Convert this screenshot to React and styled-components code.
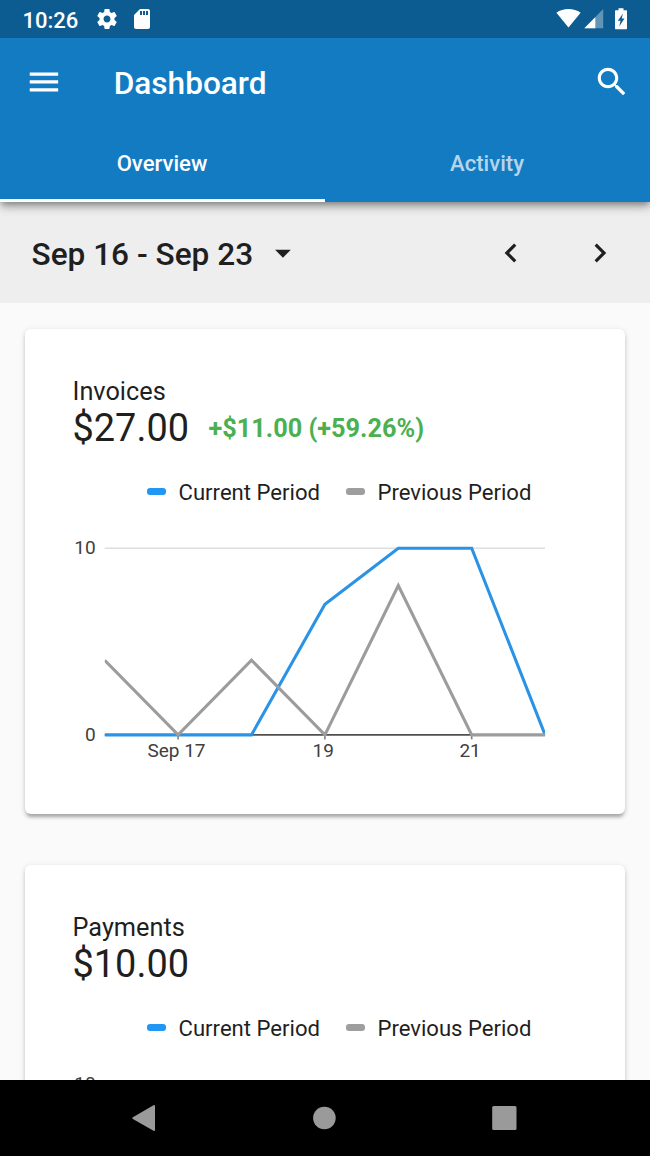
import React from "react";
import styled, { createGlobalStyle } from "styled-components";

const GlobalStyle = createGlobalStyle`
  * { box-sizing: border-box; }
  body { margin: 0; background: #fafafa; font-family: Roboto, "Liberation Sans", sans-serif; }
  svg { display: block; flex: none; }
`;

const Screen = styled.div`
  display: flex;
  flex-direction: column;
  width: 650px;
  height: 1156px;
  overflow: hidden;
  color: #1f1f1f;
`;

const StatusBar = styled.header`
  flex: none;
  position: relative;
  z-index: 2;
  display: flex;
  align-items: center;
  justify-content: space-between;
  height: 38px;
  padding: 0 23px 0 22.5px;
  background: #0d5c91;
  color: #fff;
`;

const StatusGroup = styled.div`
  display: flex;
  align-items: center;
`;

const Clock = styled.span`
  width: 74.5px;
  font-size: 22px;
  font-weight: 500;
  line-height: 34px;
  padding-top: 3px;
`;

const StatusIcon = styled.svg`
  width: ${(p) => p.$w}px;
  height: 22px;
  margin-left: ${(p) => p.$gap || 0}px;
  fill: #fff;
`;

const AppBar = styled.div`
  flex: none;
  position: relative;
  z-index: 1;
  height: 164.3px;
  background: #127bc2;
  color: #fff;
  box-shadow: 0 3px 6px -1.5px rgba(0, 0, 0, 0.3), 0 6px 8px rgba(0, 0, 0, 0.16), 0 1.5px 15px rgba(0, 0, 0, 0.12);
`;

const Toolbar = styled.div`
  display: flex;
  align-items: center;
  height: 88.5px;
  padding: 0 19px 0 25.3px;
`;

const Title = styled.h1`
  flex: 1;
  margin: 3px 0 0 50.5px;
  font-size: 31.6px;
  font-weight: 500;
  line-height: 40px;
`;

const Icon = styled.svg`
  width: 37.9px;
  height: 37.9px;
  fill: currentColor;
`;

const Tabs = styled.nav`
  display: flex;
  height: 75.8px;
`;

const Tab = styled.div`
  flex: 1;
  display: flex;
  align-items: center;
  justify-content: center;
  padding: 0 1px 0 0;
  border-bottom: 3.3px solid ${(p) => (p.$active ? "#fff" : "transparent")};
  color: ${(p) => (p.$active ? "#fff" : "rgba(255,255,255,0.7)")};
  font-size: 22.1px;
  font-weight: 500;
`;

const DateBar = styled.section`
  flex: none;
  display: flex;
  align-items: center;
  height: 100.7px;
  padding: 0 31.5px 0 31.5px;
  background: #eee;
`;

const DateRange = styled.div`
  flex: 1;
  display: flex;
  align-items: center;
  gap: 10.5px;
`;

const DateText = styled.span`
  padding-top: 4.5px;
  font-size: 31.6px;
  font-weight: 500;
  line-height: 40px;
`;

const Pager = styled.div`
  display: flex;
  gap: 50.5px;
`;

const Content = styled.main`
  flex: 1;
  min-height: 0;
  overflow: hidden;
  display: flex;
  flex-direction: column;
  gap: 51px;
  padding: 26px 25px 0;
`;

const Card = styled.article`
  flex: none;
  height: 485px;
  padding: 47px 48px 0 47.5px;
  border-radius: 6px;
  background: #fff;
  box-shadow: 0 4.5px 3px -2px rgba(0, 0, 0, 0.16), 0 3px 4px rgba(0, 0, 0, 0.14), 0 1.5px 6px rgba(0, 0, 0, 0.1);
`;

const CardTitle = styled.h2`
  margin: 0;
  font-size: 25.3px;
  font-weight: 400;
  line-height: 32px;
`;

const Totals = styled.div`
  display: flex;
  align-items: center;
  gap: 19.5px;
  height: 41px;
`;

const Amount = styled.span`
  font-size: 37.9px;
  line-height: 41px;
`;

const Change = styled.span`
  padding-top: 1px;
  color: #4caf50;
  font-size: 25.3px;
  font-weight: 700;
`;

const Legend = styled.div`
  display: flex;
  justify-content: center;
  gap: 26px;
  margin: 29px 0 0 29px;
  white-space: nowrap;
`;

const LegendItem = styled.div`
  display: flex;
  align-items: center;
  gap: 12.5px;
  font-size: 22.1px;
  line-height: 28px;
`;

const Swatch = styled.i`
  width: 19px;
  height: 6.5px;
  margin-top: -1px;
  border-radius: 3px;
  background: ${(p) => p.$color};
`;

const Chart = styled.svg`
  width: 504px;
  height: 240px;
  margin-top: 23px;
`;

const AxisLabel = styled.text`
  fill: #404040;
  font-size: 19px;
  text-anchor: ${(p) => p.$anchor || "middle"};
`;

const NavBar = styled.footer`
  flex: none;
  display: flex;
  align-items: center;
  justify-content: space-between;
  height: 76px;
  padding: 0 133px 0 131px;
  background: #000;
`;

const NavIcon = styled.svg`
  width: 26px;
  height: 28px;
  fill: #9a9a9a;
`;

const BLUE = "#2a93e6";
const GREY = "#9c9c9c";
const LEFT = 31.7;
const STEP = 73.4;
const TOP = 19.2;
const BASE = 205.9;

const toPoints = (values) =>
  values.map((v, i) => `${LEFT + i * STEP},${BASE - (v / 10) * (BASE - TOP)}`).join(" ");

function PeriodChart({ id, current, previous, labels }) {
  const right = LEFT + 6 * STEP;
  return (
    <Chart viewBox="0 0 504 240">
      <clipPath id={id}>
        <rect x={LEFT} y="0" width={6 * STEP} height="240" />
      </clipPath>
      <line x1={LEFT} x2={right} y1={TOP} y2={TOP} stroke="#dedede" strokeWidth="1.6" />
      <line x1={LEFT} x2={right} y1={BASE} y2={BASE} stroke="#505050" strokeWidth="1.6" />
      {labels.map(([i]) => (
        <line key={i} x1={LEFT + i * STEP} x2={LEFT + i * STEP} y1={BASE} y2={BASE + 4.5} stroke="#808080" strokeWidth="1.6" />
      ))}
      <g clipPath={`url(#${id})`} fill="none" strokeWidth="3.1">
        <polyline points={toPoints(current)} stroke={BLUE} />
        <polyline points={toPoints(previous)} stroke={GREY} />
      </g>
      <AxisLabel $anchor="end" x="22.700" y="25">10</AxisLabel>
      <AxisLabel $anchor="end" x="22.700" y="212">0</AxisLabel>
      {labels.map(([i, text]) => (
        <AxisLabel key={text} x={LEFT + i * STEP - 1.6} y="228">{text}</AxisLabel>
      ))}
    </Chart>
  );
}

function SummaryCard({ title, amount, change, ...chart }) {
  return (
    <Card>
      <CardTitle>{title}</CardTitle>
      <Totals>
        <Amount>{amount}</Amount>
        {change && <Change>{change}</Change>}
      </Totals>
      <Legend>
        <LegendItem><Swatch $color="#2196f3" />Current Period</LegendItem>
        <LegendItem><Swatch $color="#9e9e9e" />Previous Period</LegendItem>
      </Legend>
      <PeriodChart {...chart} />
    </Card>
  );
}

const LABELS = [[1, "Sep 17"], [3, "19"], [5, "21"]];

export default function App() {
  return (
    <Screen>
      <GlobalStyle />
      <StatusBar>
        <StatusGroup>
          <Clock>10:26</Clock>
          <StatusIcon $w={20} viewBox="2 1 20 22">
            <path d="M19.43 12.98c.04-.32.07-.64.07-.98s-.03-.66-.07-.98l2.11-1.65c.19-.15.24-.42.12-.64l-2-3.46c-.12-.22-.39-.3-.61-.22l-2.49 1c-.52-.4-1.08-.73-1.69-.98l-.38-2.65C14.46 2.18 14.25 2 14 2h-4c-.25 0-.46.18-.49.42l-.38 2.65c-.61.25-1.17.59-1.69.98l-2.49-1c-.23-.09-.49 0-.61.22l-2 3.46c-.13.22-.07.49.12.64l2.11 1.65c-.04.32-.07.65-.07.98s.03.66.07.98l-2.11 1.65c-.19.15-.24.42-.12.64l2 3.46c.12.22.39.3.61.22l2.49-1c.52.4 1.08.73 1.69.98l.38 2.65c.03.24.24.42.49.42h4c.25 0 .46-.18.49-.42l.38-2.65c.61-.25 1.17-.59 1.69-.98l2.49 1c.23.09.49 0 .61-.22l2-3.46c.12-.22.07-.49-.12-.64l-2.11-1.65zM12 15.5c-1.93 0-3.5-1.57-3.5-3.5s1.57-3.5 3.5-3.5 3.5 1.57 3.5 3.5-1.57 3.5-3.5 3.5z" />
          </StatusIcon>
          <StatusIcon $w={16} $gap={17} viewBox="4 1 16 22">
            <path d="M18 2h-8L4.02 8 4 20c0 1.1.9 2 2 2h12c1.1 0 2-.9 2-2V4c0-1.1-.9-2-2-2zm-6 6h-2V4h2v4zm3 0h-2V4h2v4zm3 0h-2V4h2v4z" />
          </StatusIcon>
        </StatusGroup>
        <StatusGroup>
          <StatusIcon $w={25} viewBox="0 0 25 22">
            <path d="M12.500 19.500L.4 4.700C3.800 2.200 8 1 12.500 1s8.700 1.200 12.100 3.700z" />
          </StatusIcon>
          <StatusIcon $w={20} $gap={3} viewBox="0 0 20 22">
            <path d="M19.200 1v19.300H.3z" opacity=".35" />
            <path d="M11.300 9.200v11.100H.3z" />
          </StatusIcon>
          <StatusIcon $w={12} $gap={11} viewBox="0 0 12 22">
            <path fillRule="evenodd" d="M3.500.2h5v2H11c.6 0 1 .4 1 1v17c0 .6-.4 1-1 1H1c-.6 0-1-.4-1-1v-17c0-.6.4-1 1-1h2.500zM8 5.500L2.800 12.800H5.600L4.200 18.400L9.500 10.500H6.700z" />
          </StatusIcon>
        </StatusGroup>
      </StatusBar>
      <AppBar>
        <Toolbar>
          <Icon viewBox="0 0 24 24"><path d="M3 18h18v-2H3v2zm0-5h18v-2H3v2zm0-7v2h18V6H3z" /></Icon>
          <Title>Dashboard</Title>
          <Icon viewBox="0 0 24 24">
            <path d="M15.5 14h-.79l-.28-.27C15.41 12.590 16 11.110 16 9.500 16 5.910 13.090 3 9.500 3S3 5.910 3 9.500 5.910 16 9.500 16c1.610 0 3.090-.59 4.230-1.570l.27.28v.79l5 4.990L20.490 19l-4.990-5zm-6 0C7.010 14 5 11.990 5 9.500S7.010 5 9.500 5 14 7.010 14 9.500 11.990 14 9.500 14z" />
          </Icon>
        </Toolbar>
        <Tabs>
          <Tab $active>Overview</Tab>
          <Tab>Activity</Tab>
        </Tabs>
      </AppBar>
      <DateBar>
        <DateRange>
          <DateText>Sep 16 - Sep 23</DateText>
          <Icon viewBox="0 0 24 24"><path d="M7 10l5 5 5-5z" /></Icon>
        </DateRange>
        <Pager>
          <Icon viewBox="0 0 24 24"><path d="M15.410 7.410L14 6l-6 6 6 6 1.410-1.410L10.830 12z" /></Icon>
          <Icon viewBox="0 0 24 24"><path d="M10 6L8.590 7.410 13.170 12l-4.580 4.590L10 18l6-6z" /></Icon>
        </Pager>
      </DateBar>
      <Content>
        <SummaryCard
          id="invoices"
          title="Invoices"
          amount="$27.00"
          change="+$11.00 (+59.26%)"
          current={[0, 0, 0, 7, 10, 10, 0]}
          previous={[4, 0, 4, 0, 8, 0, 0]}
          labels={LABELS}
        />
        <SummaryCard
          id="payments"
          title="Payments"
          amount="$10.00"
          current={[0, 0, 0, 0, 10, 0, 0]}
          previous={[0, 0, 0, 0, 0, 0, 0]}
          labels={LABELS}
        />
      </Content>
      <NavBar>
        <NavIcon viewBox="0 0 26 28"><path d="M22.500 1.200c.8-.5 1.500-.1 1.500.8v24c0 .9-.7 1.300-1.500.8L1.900 15c-.8-.5-.8-1.300 0-1.800z" /></NavIcon>
        <NavIcon viewBox="0 0 26 28"><circle cx="13.400" cy="14" r="11.300" /></NavIcon>
        <NavIcon viewBox="0 0 26 28"><rect x="1.200" y="2" width="24.300" height="24" rx="1.500" /></NavIcon>
      </NavBar>
    </Screen>
  );
}
